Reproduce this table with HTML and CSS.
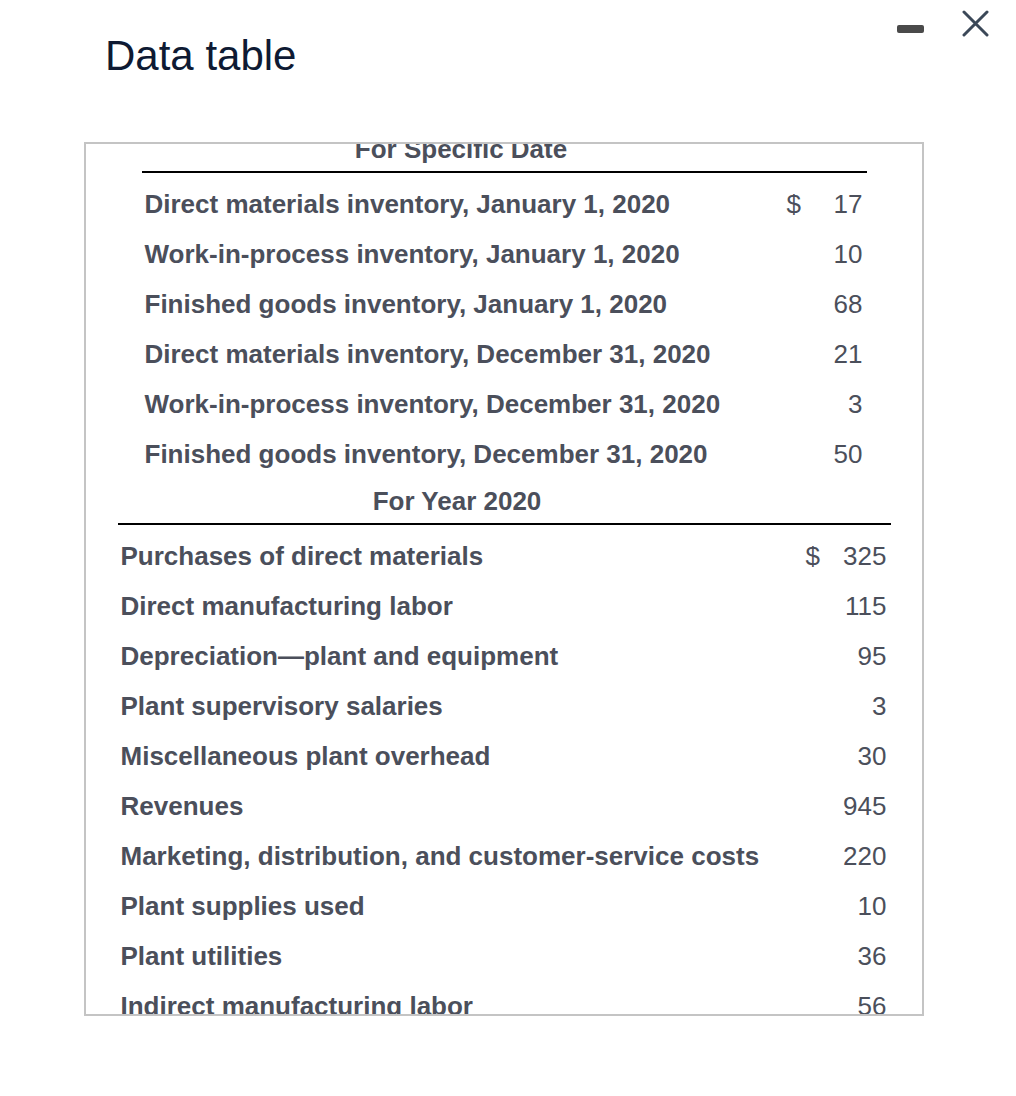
FILE: index.html
```html
<!DOCTYPE html>
<html lang="en">
<head>
<meta charset="utf-8">
<title>Data table</title>
<link rel="stylesheet" href="styles.css">
</head>
<body>
<div class="topbar">
  <h1 class="title">Data table</h1>
  <div class="controls">
    <span class="minimize" aria-label="Minimize"></span>
    <svg class="close" width="27" height="27" viewBox="0 0 27 27" aria-label="Close">
      <path d="M2 2 L25 25 M25 2 L2 25" stroke="#3b4858" stroke-width="3" stroke-linecap="round" fill="none"/>
    </svg>
  </div>
</div>
<div class="box">
  <div class="scroller">
    <table class="tbl t1">
      <thead>
        <tr><th class="head">For Specific Date</th><th colspan="2"></th></tr>
      </thead>
      <tbody>
        <tr><td class="lbl">Direct materials inventory, January 1, 2020</td><td class="cur">$</td><td class="num">17</td></tr>
        <tr><td class="lbl">Work-in-process inventory, January 1, 2020</td><td class="cur"></td><td class="num">10</td></tr>
        <tr><td class="lbl">Finished goods inventory, January 1, 2020</td><td class="cur"></td><td class="num">68</td></tr>
        <tr><td class="lbl">Direct materials inventory, December 31, 2020</td><td class="cur"></td><td class="num">21</td></tr>
        <tr><td class="lbl">Work-in-process inventory, December 31, 2020</td><td class="cur"></td><td class="num">3</td></tr>
        <tr><td class="lbl">Finished goods inventory, December 31, 2020</td><td class="cur"></td><td class="num">50</td></tr>
      </tbody>
    </table>
    <table class="tbl t2">
      <thead>
        <tr><th class="head">For Year 2020</th><th colspan="2"></th></tr>
      </thead>
      <tbody>
        <tr><td class="lbl">Purchases of direct materials</td><td class="cur">$</td><td class="num">325</td></tr>
        <tr><td class="lbl">Direct manufacturing labor</td><td class="cur"></td><td class="num">115</td></tr>
        <tr><td class="lbl">Depreciation—plant and equipment</td><td class="cur"></td><td class="num">95</td></tr>
        <tr><td class="lbl">Plant supervisory salaries</td><td class="cur"></td><td class="num">3</td></tr>
        <tr><td class="lbl">Miscellaneous plant overhead</td><td class="cur"></td><td class="num">30</td></tr>
        <tr><td class="lbl">Revenues</td><td class="cur"></td><td class="num">945</td></tr>
        <tr><td class="lbl">Marketing, distribution, and customer-service costs</td><td class="cur"></td><td class="num">220</td></tr>
        <tr><td class="lbl">Plant supplies used</td><td class="cur"></td><td class="num">10</td></tr>
        <tr><td class="lbl">Plant utilities</td><td class="cur"></td><td class="num">36</td></tr>
        <tr><td class="lbl">Indirect manufacturing labor</td><td class="cur"></td><td class="num">56</td></tr>
      </tbody>
    </table>
  </div>
</div>
</body>
</html>
```
FILE: styles.css
```css
html, body {
  margin: 0;
  padding: 0;
  background: #ffffff;
}

body {
  font-family: "Liberation Sans", Arial, sans-serif;
}

.topbar {
  display: flex;
  justify-content: space-between;
  align-items: flex-start;
  padding: 0 27px 0 105px;
}

.title {
  margin: 32px 0 0;
  font-size: 42px;
  line-height: 48px;
  font-weight: 400;
  color: #0e1a33;
}

.controls {
  display: flex;
  align-items: flex-start;
  gap: 38px;
}

.minimize {
  display: block;
  width: 27px;
  height: 8px;
  margin-top: 25px;
  border-radius: 2px;
  background: #4a4a4a;
}

.close {
  display: block;
  margin-top: 10px;
}

.box {
  box-sizing: border-box;
  width: 840px;
  height: 874px;
  margin: 62px 0 0 84px;
  border: 2px solid #c4c4c4;
  overflow: hidden;
}

.scroller {
  margin-top: -17px;
}

.tbl {
  border-collapse: collapse;
  margin: 0 auto;
  color: #4b4f5b;
  font-size: 26px;
}

.t1 { width: 725px; }
.t2 { width: 773px; }

.tbl thead tr {
  border-bottom: 2px solid #000000;
}

.tbl th {
  padding: 0;
  line-height: 44px;
  font-weight: 700;
}

.head {
  text-align: center;
}

.tbl td {
  padding: 0;
  line-height: 50px;
  white-space: nowrap;
}

.tbl tbody tr:first-child td {
  padding-top: 6px;
}

.lbl {
  font-weight: 700;
  text-align: left;
  padding-left: 3px !important;
}

.t1 .head, .t1 .lbl { width: 636px; }
.t2 .head, .t2 .lbl { width: 676px; }

.cur {
  text-align: left;
}

.t1 .cur { width: 24px; padding-left: 6px !important; }
.t2 .cur { width: 24px; padding-left: 9px !important; }

.num {
  text-align: right;
  padding-right: 4px !important;
}
```
